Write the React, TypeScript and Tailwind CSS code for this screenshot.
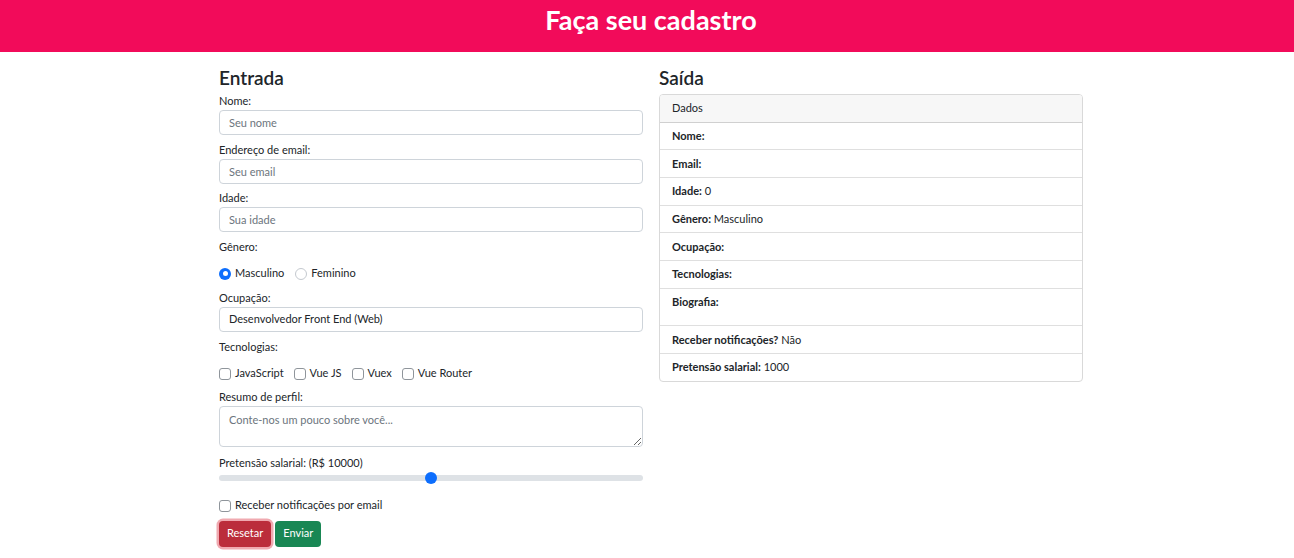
import React from "react";

const font = { fontFamily: 'Lato, "Open Sans", sans-serif' };

function Field({ label, placeholder }: { label: string; placeholder: string }) {
  return (
    <div className="mb-[5.5px]">
      <label className="block leading-[18px]">{label}</label>
      <input
        type="text"
        placeholder={placeholder}
        className="block h-[25px] w-full rounded-[4px] border border-[#ced4da] px-[9px] text-[11px] outline-none placeholder:text-[#6c757d]"
      />
    </div>
  );
}

function Radio({ checked, label }: { checked?: boolean; label: string }) {
  return (
    <span className="flex items-center gap-[4px]">
      {checked ? (
        <span className="flex h-[12px] w-[12px] items-center justify-center rounded-full bg-[#0d6efd]">
          <span className="h-[5px] w-[5px] rounded-full bg-white" />
        </span>
      ) : (
        <span className="h-[12px] w-[12px] rounded-full border border-[#c4c9cf]" />
      )}
      <span>{label}</span>
    </span>
  );
}

function Check({ label }: { label: string }) {
  return (
    <span className="flex items-center gap-[4px]">
      <span className="h-[12px] w-[12px] rounded-[3px] border border-[#8f959b]" />
      <span>{label}</span>
    </span>
  );
}

function Row({ label, value, tall }: { label: string; value?: string; tall?: boolean }) {
  return (
    <div className={`border-t border-[#dfdfdf] px-[12px] py-[4.35px] leading-[18px] ${tall ? "pb-[14px]" : ""}`}>
      <span className="font-bold">{label}</span>
      {value ? <span> {value}</span> : null}
    </div>
  );
}

export default function App() {
  return (
    <div className="min-h-screen bg-white text-[#212529]" style={font}>
      <header className="flex h-[52px] items-start justify-center bg-[#f20b5a] pt-[2px] pl-[8px]">
        <h1 className="text-[27px] font-bold leading-[36px] text-white">Faça seu cadastro</h1>
      </header>

      <main className="flex justify-center gap-[16px] pl-[8px] pt-[14px]">
        <section className="w-[424px] text-[11px]">
          <h3 className="mb-[2px] text-[19px] font-semibold leading-[24px]">Entrada</h3>

          <Field label="Nome:" placeholder="Seu nome" />
          <Field label="Endereço de email:" placeholder="Seu email" />
          <Field label="Idade:" placeholder="Sua idade" />

          <div className="mb-[6px]">
            <label className="block leading-[18px]">Gênero:</label>
            <div className="mt-[9px] flex h-[18px] items-center gap-[11px]">
              <Radio checked label="Masculino" />
              <Radio label="Feminino" />
            </div>
          </div>

          <div className="mb-[6px]">
            <label className="block leading-[18px]">Ocupação:</label>
            <select className="block h-[25px] w-full appearance-none rounded-[4px] border border-[#ced4da] bg-white px-[9px] text-[11px] outline-none">
              <option>Desenvolvedor Front End (Web)</option>
            </select>
          </div>

          <div className="mb-[5px]">
            <label className="block leading-[18px]">Tecnologias:</label>
            <div className="mt-[9px] flex h-[18px] items-center gap-[10px]">
              <Check label="JavaScript" />
              <Check label="Vue JS" />
              <Check label="Vuex" />
              <Check label="Vue Router" />
            </div>
          </div>

          <div className="mb-[7px]">
            <label className="block leading-[18px]">Resumo de perfil:</label>
            <textarea
              placeholder="Conte-nos um pouco sobre você..."
              className="block h-[41px] w-full rounded-[4px] border border-[#ced4da] px-[9px] py-[4px] text-[11px] leading-[18px] outline-none placeholder:text-[#6c757d]"
            />
          </div>

          <div>
            <label className="block leading-[18px]">Pretensão salarial: (R$ 10000)</label>
            <div className="flex h-[12px] items-center">
              <div className="relative h-[6px] w-full rounded-full bg-[#dee2e6]">
                <span className="absolute left-[206px] top-[-3px] h-[12px] w-[12px] rounded-full bg-[#0d6efd]" />
              </div>
            </div>
          </div>

          <div className="mt-[13px] flex h-[18px] items-center">
            <Check label="Receber notificações por email" />
          </div>

          <div className="mt-[6px] flex gap-[4px]">
            <button className="h-[26px] rounded-[4px] bg-[#bb2d3b] px-[8px] text-[11px] text-white shadow-[0_0_0_2.5px_rgba(225,83,97,0.5)]">
              Resetar
            </button>
            <button className="h-[26px] rounded-[4px] bg-[#198754] px-[8px] text-[11px] text-white">
              Enviar
            </button>
          </div>
        </section>

        <section className="w-[424px] text-[11px]">
          <h3 className="mb-[4px] text-[19px] font-semibold leading-[24px]">Saída</h3>
          <div className="overflow-hidden rounded-[4px] border border-[#d9d9d9]">
            <div className="border-b border-[#d0d0d0] bg-[#f7f7f7] px-[12px] py-[4.35px] leading-[18px]">Dados</div>
            <div className="[&>div:first-child]:border-t-0">
              <Row label="Nome:" />
              <Row label="Email:" />
              <Row label="Idade:" value="0" />
              <Row label="Gênero:" value="Masculino" />
              <Row label="Ocupação:" />
              <Row label="Tecnologias:" />
              <Row label="Biografia:" tall />
              <Row label="Receber notificações?" value="Não" />
              <Row label="Pretensão salarial:" value="1000" />
            </div>
          </div>
        </section>
      </main>
    </div>
  );
}
